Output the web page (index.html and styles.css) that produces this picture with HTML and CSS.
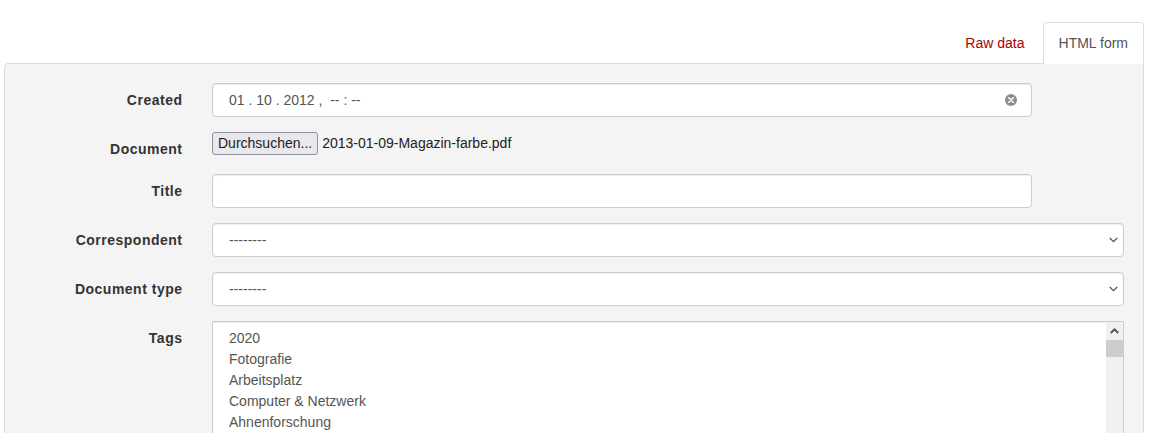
FILE: index.html
```html
<!DOCTYPE html>
<html lang="de">
<head>
<meta charset="utf-8">
<title>Document</title>
<link rel="stylesheet" href="styles.css">
</head>
<body>
<div class="page">
  <ul class="tabs">
    <li class="tab"><a class="tab-link" href="#">Raw data</a></li>
    <li class="tab active"><span class="tab-link">HTML form</span></li>
  </ul>
  <div class="panel">
    <div class="row">
      <label class="label">Created</label>
      <div class="field">
        <div class="input input-narrow input-date">
          <span class="date-text">01 . 10 . 2012 ,  -- : --</span>
          <span class="clear-btn"><svg width="12" height="12" viewBox="0 0 12 12"><circle cx="6" cy="6" r="6" fill="#8f8f8f"/><path d="M3.8 3.8 L8.2 8.2 M8.2 3.8 L3.8 8.2" stroke="#fff" stroke-width="1.6" stroke-linecap="round"/></svg></span>
        </div>
      </div>
    </div>
    <div class="row">
      <label class="label">Document</label>
      <div class="field file-field">
        <span class="file-btn">Durchsuchen...</span>
        <span class="file-name">2013-01-09-Magazin-farbe.pdf</span>
      </div>
    </div>
    <div class="row">
      <label class="label">Title</label>
      <div class="field">
        <div class="input input-narrow"></div>
      </div>
    </div>
    <div class="row">
      <label class="label">Correspondent</label>
      <div class="field">
        <div class="input select">
          <span class="select-text">--------</span>
          <svg class="chevron" width="9" height="6" viewBox="0 0 9 6"><path d="M0.8 1 L4.5 4.7 L8.2 1" fill="none" stroke="#555" stroke-width="1.3"/></svg>
        </div>
      </div>
    </div>
    <div class="row">
      <label class="label">Document type</label>
      <div class="field">
        <div class="input select">
          <span class="select-text">--------</span>
          <svg class="chevron" width="9" height="6" viewBox="0 0 9 6"><path d="M0.8 1 L4.5 4.7 L8.2 1" fill="none" stroke="#555" stroke-width="1.3"/></svg>
        </div>
      </div>
    </div>
    <div class="row">
      <label class="label">Tags</label>
      <div class="field">
        <div class="listbox">
          <ul class="options">
            <li>2020</li>
            <li>Fotografie</li>
            <li>Arbeitsplatz</li>
            <li>Computer &amp; Netzwerk</li>
            <li>Ahnenforschung</li>
          </ul>
          <div class="scrollbar">
            <div class="scroll-up"><svg width="9" height="6" viewBox="0 0 9 6"><path d="M0.8 5 L4.5 1.3 L8.2 5" fill="none" stroke="#505050" stroke-width="1.8"/></svg></div>
            <div class="scroll-thumb"></div>
          </div>
        </div>
      </div>
    </div>
  </div>
</div>
</body>
</html>
```

FILE: styles.css
```css
html, body {
  margin: 0;
  padding: 0;
  height: 433px;
  overflow: hidden;
  background: #fff;
}

body {
  font-family: "Liberation Sans", Arial, sans-serif;
  font-size: 14px;
  line-height: 20px;
  color: #333;
}

.page {
  padding: 22px 29px 0 4px;
}

.tabs {
  list-style: none;
  margin: 0;
  padding: 0;
  display: flex;
  justify-content: flex-end;
}

.tab {
  margin-right: 2px;
}

.tab:last-child {
  margin-right: 0;
}

.tab-link {
  display: block;
  padding: 10px 15px;
  border: 1px solid transparent;
  border-bottom: 0;
  border-radius: 4px 4px 0 0;
  color: #a00;
  text-decoration: none;
}

.tab.active {
  position: relative;
  z-index: 1;
  margin-bottom: -1px;
}

.tab.active .tab-link {
  background: #fff;
  border-color: #ddd;
  color: #555;
  padding-bottom: 11px;
}

.panel {
  border: 1px solid #ddd;
  border-radius: 4px 0 0 0;
  background: #f4f4f4;
  padding: 19px 19px 0 0;
  height: 420px;
}

.row {
  display: grid;
  grid-template-columns: 177px 1fr;
  column-gap: 30px;
  margin-bottom: 15px;
}

.label {
  text-align: right;
  font-weight: bold;
  letter-spacing: 0.5px;
  margin-right: -0.5px;
  padding-top: 7px;
  color: #333;
}

.input {
  box-sizing: border-box;
  height: 34px;
  background: #fff;
  border: 1px solid #ccc;
  border-radius: 4px;
  box-shadow: inset 0 1px 1px rgba(0, 0, 0, 0.075);
  padding: 6px 12px 6px 16px;
  color: #555;
  display: flex;
  align-items: center;
}

.input-narrow {
  width: 820px;
}

.date-text {
  white-space: pre;
  flex: 1;
}

.clear-btn {
  display: flex;
  margin-right: 2px;
}

.file-field {
  height: 27px;
  display: flex;
  align-items: flex-start;
}

.file-btn {
  box-sizing: border-box;
  height: 23px;
  line-height: 21px;
  padding: 0 5px;
  border: 1px solid #8f8f9d;
  border-radius: 3px;
  background: #e9e9ed;
  color: #1b1b1b;
}

.file-name {
  margin-left: 4px;
  line-height: 23px;
  color: #222;
}

.select {
  width: 100%;
  padding-right: 5px;
}

.select-text {
  flex: 1;
}

.chevron {
  display: block;
}

.listbox {
  box-sizing: border-box;
  height: 200px;
  background: #fff;
  border: 1px solid #ccc;
  border-radius: 2px;
  box-shadow: inset 0 1px 1px rgba(0, 0, 0, 0.075);
  display: flex;
}

.options {
  list-style: none;
  margin: 0;
  padding: 6px 0 0 16px;
  flex: 1;
  color: #555;
  line-height: 21px;
}

.scrollbar {
  width: 17px;
  background: #f0f0f0;
  display: flex;
  flex-direction: column;
}

.scroll-up {
  height: 17px;
  display: flex;
  align-items: center;
  justify-content: center;
}

.scroll-thumb {
  margin-top: 1px;
  height: 17px;
  background: #cdcdcd;
}
```
